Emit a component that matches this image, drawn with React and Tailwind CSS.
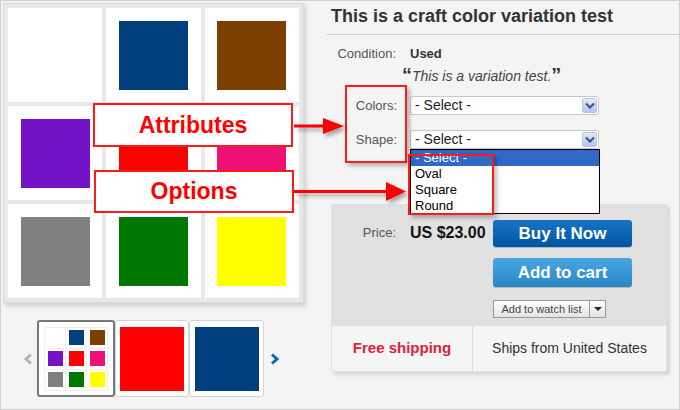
import React from 'react';

const BIG = [
  null, 'bg-[#003f7d]', 'bg-[#7b3f00]',
  'bg-[#7412c8]', 'bg-[#ff0000]', 'bg-[#ee1277]',
  'bg-[#808080]', 'bg-[#007800]', 'bg-[#ffff00]',
];

const Chevron = () => (
  <svg width="10" height="7" viewBox="0 0 10 7">
    <path d="M1 1.5 L5 5.5 L9 1.5" fill="none" stroke="#3d5686" strokeWidth="2.2" />
  </svg>
);

const FakeSelect = ({ children }) => (
  <div className="relative w-[189px] h-[19px] bg-white border border-[#c8c8c8] rounded-[2px] flex items-center pl-[4px] text-[14px] text-[#222]">
    - Select -
    <div className="absolute right-[1px] top-[1px] w-[15px] h-[15px] rounded-[2px] bg-gradient-to-b from-[#e2eafa] to-[#b3c7ee] border border-[#b9c6e0] flex items-center justify-center">
      <Chevron />
    </div>
    {children}
  </div>
);

const AnnoBox = ({ label, className }) => (
  <div className={`absolute bg-white border-2 border-[#ff1a1a] flex items-center justify-center text-[23px] font-bold text-[#ff0000] ${className}`}>
    {label}
  </div>
);

export default function App() {
  return (
    <div className="w-[680px] h-[410px] relative overflow-hidden bg-[#f4f4f4] border border-[#d0d0d0] font-['Liberation_Sans',Arial,sans-serif] flex">
      {/* left: gallery */}
      <div className="w-[326px] shrink-0 pl-[2px] pt-[2px]">
        <div className="w-[301px] p-[4px] bg-[#e8e8e8] border border-[#dadada] shadow-[2px_3px_4px_rgba(0,0,0,0.15)] grid grid-cols-3 gap-[4px]">
          {BIG.map((c, i) => (
            <div key={i} className="h-[94px] bg-white flex items-center justify-center">
              {c && <div className={`w-[69px] h-[69px] ${c}`} />}
            </div>
          ))}
        </div>

        <div className="mt-[17px] flex items-center">
          <span className="w-[34px] flex justify-end pr-[4px]">
            <svg width="10" height="12" viewBox="0 0 10 12">
              <path d="M8 1.5 L3 6 L8 10.5" fill="none" stroke="#b5b5b5" strokeWidth="3" />
            </svg>
          </span>
          <div className="w-[78px] h-[77px] bg-white border-2 border-[#777] rounded-[3px] flex items-center justify-center">
            <div className="grid grid-cols-3 gap-[1px] bg-[#eeeeee] p-[1px]">
              {BIG.map((c, i) => (
                <div key={i} className="w-[20px] h-[20px] bg-white flex items-center justify-center">
                  {c && <div className={`w-[15px] h-[15px] ${c}`} />}
                </div>
              ))}
            </div>
          </div>
          <div className="w-[74px] h-[77px] bg-white border border-[#d4d4d4] rounded-[3px] flex items-center justify-center">
            <div className="w-[64px] h-[64px] bg-[#ff0000]" />
          </div>
          <div className="w-[75px] h-[77px] bg-white border border-[#d4d4d4] rounded-[3px] flex items-center justify-center">
            <div className="w-[64px] h-[64px] bg-[#003f7d]" />
          </div>
          <span className="ml-[6px] flex">
            <svg width="10" height="12" viewBox="0 0 10 12">
              <path d="M2 1.5 L7 6 L2 10.5" fill="none" stroke="#0a6bbd" strokeWidth="3" />
            </svg>
          </span>
        </div>
      </div>

      {/* right: details */}
      <div className="flex-1 text-[#333]">
        <div className="h-[34px] border-b border-[#cccccc] pl-[4px] pt-[4px] text-[18px] font-bold leading-[22px] text-[#333]">
          This is a craft color variation test
        </div>

        <div className="mt-[10px] flex items-center text-[13px] leading-[18px]">
          <span className="w-[69px] text-right text-[#555]">Condition:</span>
          <span className="ml-[14px] font-bold">Used</span>
        </div>
        <div className="mt-[2px] pl-[75px] flex items-center h-[22px] text-[14px]">
          <span className="text-[20px] font-bold leading-none mt-[-2px]">“</span>
          <span className="italic text-[#444]">This is a variation test.</span>
          <span className="text-[20px] font-bold leading-none mt-[-2px]">”</span>
        </div>

        <div className="mt-[9px] flex items-center text-[13px]">
          <span className="w-[70px] text-right text-[#555]">Colors:</span>
          <div className="ml-[13px]"><FakeSelect /></div>
        </div>
        <div className="mt-[14px] flex items-center text-[13px]">
          <span className="w-[70px] text-right text-[#555]">Shape:</span>
          <div className="ml-[13px]">
            <FakeSelect>
              <div className="absolute left-[-1px] top-[18px] w-[190px] h-[65px] bg-white border border-black text-[13px] leading-[16px] text-black">
                <div className="bg-[#3168c6] text-white pl-[4px] h-[16px]">- Select -</div>
                <div className="pl-[4px]">Oval</div>
                <div className="pl-[4px]">Square</div>
                <div className="pl-[4px]">Round</div>
              </div>
            </FakeSelect>
          </div>
        </div>

        {/* buy box */}
        <div className="ml-[4px] mt-[55px] w-[336px] bg-[#e1e1e1] p-[1px] shadow-[3px_3px_3px_rgba(0,0,0,0.12)]">
          <div className="flex pt-[15px]">
            <span className="w-[64px] text-right text-[13px] text-[#555] mt-[3px]">Price:</span>
            <span className="ml-[14px] w-[83px] text-[16px] font-bold text-[#111] mt-[1px]">US $23.00</span>
            <div className="w-[139px] flex flex-col">
              <button className="h-[27px] rounded-[3px] bg-gradient-to-b from-[#1a74c4] to-[#0055a2] text-white text-[17px] font-bold shadow-[0_1px_1px_rgba(0,0,0,0.2)]">Buy It Now</button>
              <button className="mt-[11px] h-[29px] rounded-[3px] bg-gradient-to-b from-[#48a7e0] to-[#2a86c6] text-white text-[17px] font-bold shadow-[0_1px_1px_rgba(0,0,0,0.2)]">Add to cart</button>
              <div className="mt-[13px] flex h-[18px] w-[113px] border border-[#999] bg-gradient-to-b from-white to-[#e4e4e4] text-[11px] text-[#444]">
                <span className="flex-1 text-center leading-[16px] border-r border-[#999]">Add to watch list</span>
                <span className="w-[15px] flex items-center justify-center">
                  <span className="w-0 h-0 border-l-[4px] border-r-[4px] border-t-[4px] border-l-transparent border-r-transparent border-t-[#222]" />
                </span>
              </div>
            </div>
          </div>
          <div className="mt-[8px] h-[45px] flex bg-[#f5f5f5]">
            <div className="w-[141px] border-r border-[#dddddd] flex items-center justify-center text-[15px] font-bold text-[#e0203c]">Free shipping</div>
            <div className="flex-1 flex items-center justify-center text-[14px] text-[#333]">Ships from United States</div>
          </div>
        </div>
      </div>

      {/* annotations */}
      <AnnoBox label="Attributes" className="left-[92px] top-[102px] w-[200px] h-[44px]" />
      <AnnoBox label="Options" className="left-[93px] top-[169px] w-[200px] h-[43px]" />

      <div className="absolute left-[344px] top-[84px] w-[62px] h-[78px] border-2 border-[#ff1a1a] shadow-[3px_3px_4px_rgba(0,0,0,0.25)]" />
      <div className="absolute left-[407px] top-[153px] w-[86px] h-[61px] border-2 border-[#ff1a1a] shadow-[3px_3px_4px_rgba(0,0,0,0.25)]" />

      <svg className="absolute left-0 top-0 pointer-events-none" width="680" height="410">
        <defs>
          <filter id="sh" x="-20%" y="-50%" width="140%" height="200%">
            <feDropShadow dx="3" dy="3" stdDeviation="2" floodColor="#000" floodOpacity="0.35" />
          </filter>
        </defs>
        <g filter="url(#sh)" fill="#ff0000">
          <rect x="293" y="123.5" width="31" height="3" />
          <polygon points="322,117 343,125 322,133" />
          <rect x="293" y="189" width="94" height="3" />
          <polygon points="385,181 405,190.5 385,200" />
        </g>
      </svg>
    </div>
  );
}
